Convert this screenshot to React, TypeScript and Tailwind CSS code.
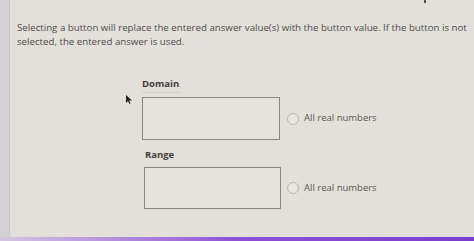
export default function App() {
  return (
    <div
      className="w-[474px] h-[241px] overflow-hidden flex flex-col bg-[#e3e0da] text-[#4d4b4a]"
      style={{ fontFamily: '"Open Sans", "Liberation Sans", sans-serif' }}
    >
      <div className="flex flex-1 min-h-0">
        <div className="w-[10px] shrink-0 bg-[#d3d3d6] border-r border-[#c9c8c8]" />
        <div className="relative flex-1 flex flex-col pl-[7px] pt-[21px]">
          <div className="absolute left-[414px] top-0 w-[2px] h-[3px] bg-[#555]" />
          <p className="text-[9.7px] leading-[14px] whitespace-nowrap">
            Selecting a button will replace the entered answer value(s) with the button value. If the button is not
            <br />
            selected, the entered answer is used.
          </p>
          <div className="relative flex flex-col pl-[125px] pt-[28px]">
            <svg className="absolute left-[108px] top-[45px]" width="8" height="11" viewBox="0 0 8 11">
              <path d="M1 1 L1 9 L3 7 L4.5 10 L5.5 9.5 L4.2 6.6 L7 6.6 Z" fill="#222" />
            </svg>
            <div className="text-[9.5px] font-bold leading-[14px] text-[#3f3d3c]">Domain</div>
            <div className="w-[38px] h-px bg-[#d3d0ca] mt-[1px]" />
            <div className="flex items-center mt-[4px]">
              <div className="w-[138px] h-[43px] border border-[#888582] bg-[#e6e3de]" />
              <div className="w-[12px] h-[12px] rounded-full border border-[#b9b6b1] bg-[#e9e6e1] ml-[7px]" />
              <span className="ml-[5px] text-[9.5px] text-[#5a5856]">All real numbers</span>
            </div>
            <div className="text-[9.5px] font-bold leading-[14px] text-[#3f3d3c] mt-[8px] ml-[3px]">Range</div>
            <div className="flex items-center mt-[5px] ml-[2px]">
              <div className="w-[137px] h-[42px] border border-[#888582] bg-[#e6e3de]" />
              <div className="w-[12px] h-[12px] rounded-full border border-[#b9b6b1] bg-[#e9e6e1] ml-[6px]" />
              <span className="ml-[5px] text-[9.5px] text-[#5a5856]">All real numbers</span>
            </div>
          </div>
        </div>
      </div>
      <div className="h-[4px] shrink-0 bg-gradient-to-r from-[#d6c6e0] via-[#8f4fd6] to-[#7a3ed0]" />
    </div>
  );
}
